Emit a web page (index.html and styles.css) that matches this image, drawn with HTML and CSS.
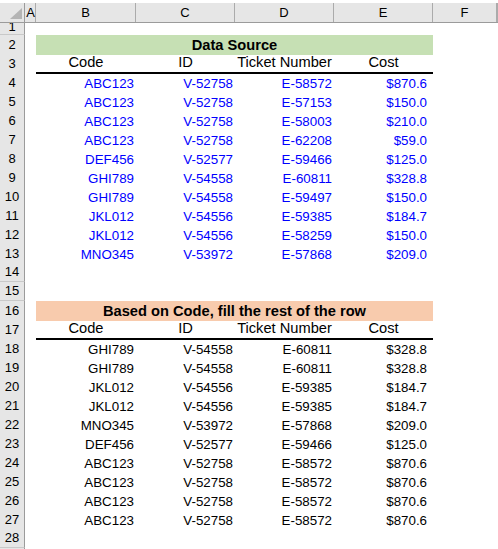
FILE: index.html
```html
<!DOCTYPE html>
<html>
<head>
<meta charset="utf-8">
<link rel="stylesheet" href="styles.css">
</head>
<body>
<div class="sheet">
  <div class="colhead">
    <div class="corner"><span class="tri"></span></div>
    <div class="ch a">A</div>
    <div class="ch">B</div>
    <div class="ch">C</div>
    <div class="ch">D</div>
    <div class="ch">E</div>
    <div class="ch f">F</div>
    <div class="ch g"></div>
  </div>

  <div class="row r1"><div class="rh">1</div></div>
  <div class="row"><div class="rh">2</div><div class="band green">Data Source</div></div>
  <div class="row"><div class="rh">3</div>
    <div class="hdr"><span>Code</span><span>ID</span><span>Ticket Number</span><span>Cost</span></div>
  </div>
  <div class="row blue"><div class="rh">4</div><div class="c b">ABC123</div><div class="c">V-52758</div><div class="c">E-58572</div><div class="c e">$870.6</div></div>
  <div class="row blue"><div class="rh">5</div><div class="c b">ABC123</div><div class="c">V-52758</div><div class="c">E-57153</div><div class="c e">$150.0</div></div>
  <div class="row blue"><div class="rh">6</div><div class="c b">ABC123</div><div class="c">V-52758</div><div class="c">E-58003</div><div class="c e">$210.0</div></div>
  <div class="row blue"><div class="rh">7</div><div class="c b">ABC123</div><div class="c">V-52758</div><div class="c">E-62208</div><div class="c e">$59.0</div></div>
  <div class="row blue"><div class="rh">8</div><div class="c b">DEF456</div><div class="c">V-52577</div><div class="c">E-59466</div><div class="c e">$125.0</div></div>
  <div class="row blue"><div class="rh">9</div><div class="c b">GHI789</div><div class="c">V-54558</div><div class="c">E-60811</div><div class="c e">$328.8</div></div>
  <div class="row blue"><div class="rh">10</div><div class="c b">GHI789</div><div class="c">V-54558</div><div class="c">E-59497</div><div class="c e">$150.0</div></div>
  <div class="row blue"><div class="rh">11</div><div class="c b">JKL012</div><div class="c">V-54556</div><div class="c">E-59385</div><div class="c e">$184.7</div></div>
  <div class="row blue"><div class="rh">12</div><div class="c b">JKL012</div><div class="c">V-54556</div><div class="c">E-58259</div><div class="c e">$150.0</div></div>
  <div class="row blue"><div class="rh">13</div><div class="c b">MNO345</div><div class="c">V-53972</div><div class="c">E-57868</div><div class="c e">$209.0</div></div>
  <div class="row"><div class="rh">14</div></div>
  <div class="row"><div class="rh">15</div></div>
  <div class="row"><div class="rh">16</div><div class="band orange">Based on Code, fill the rest of the row</div></div>
  <div class="row"><div class="rh">17</div>
    <div class="hdr"><span>Code</span><span>ID</span><span>Ticket Number</span><span>Cost</span></div>
  </div>
  <div class="row"><div class="rh">18</div><div class="c b">GHI789</div><div class="c">V-54558</div><div class="c">E-60811</div><div class="c e">$328.8</div></div>
  <div class="row"><div class="rh">19</div><div class="c b">GHI789</div><div class="c">V-54558</div><div class="c">E-60811</div><div class="c e">$328.8</div></div>
  <div class="row"><div class="rh">20</div><div class="c b">JKL012</div><div class="c">V-54556</div><div class="c">E-59385</div><div class="c e">$184.7</div></div>
  <div class="row"><div class="rh">21</div><div class="c b">JKL012</div><div class="c">V-54556</div><div class="c">E-59385</div><div class="c e">$184.7</div></div>
  <div class="row"><div class="rh">22</div><div class="c b">MNO345</div><div class="c">V-53972</div><div class="c">E-57868</div><div class="c e">$209.0</div></div>
  <div class="row"><div class="rh">23</div><div class="c b">DEF456</div><div class="c">V-52577</div><div class="c">E-59466</div><div class="c e">$125.0</div></div>
  <div class="row"><div class="rh">24</div><div class="c b">ABC123</div><div class="c">V-52758</div><div class="c">E-58572</div><div class="c e">$870.6</div></div>
  <div class="row"><div class="rh">25</div><div class="c b">ABC123</div><div class="c">V-52758</div><div class="c">E-58572</div><div class="c e">$870.6</div></div>
  <div class="row"><div class="rh">26</div><div class="c b">ABC123</div><div class="c">V-52758</div><div class="c">E-58572</div><div class="c e">$870.6</div></div>
  <div class="row"><div class="rh">27</div><div class="c b">ABC123</div><div class="c">V-52758</div><div class="c">E-58572</div><div class="c e">$870.6</div></div>
  <div class="row"><div class="rh">28</div></div>
  <div class="row"><div class="rh"></div></div>
</div>
</body>
</html>
```

FILE: styles.css
```css
html, body {
  margin: 0;
  padding: 0;
  background: #ffffff;
}
body {
  font-family: "Liberation Sans", Arial, sans-serif;
  color: #000;
  width: 498px;
  height: 549px;
  overflow: hidden;
}
.sheet {
  padding-top: 3px;
}
.colhead {
  display: grid;
  grid-template-columns: 25px 11px 100px 99px 99px 99px 64px 1fr;
  height: 20px;
  background: #e6e6e6;
  border-bottom: 1px solid #9b9b9b;
  box-sizing: border-box;
}
.corner {
  position: relative;
  border-right: 1px solid #9b9b9b;
}
.tri {
  position: absolute;
  right: 2px;
  bottom: 3px;
  width: 0;
  height: 0;
  border-left: 12px solid transparent;
  border-bottom: 11px solid #b4b4b4;
}
.ch {
  border-right: 1px solid #ababab;
  font-size: 13px;
  line-height: 19px;
  text-align: center;
}
.ch.a {
  padding-left: 1px;
}
.row {
  display: grid;
  grid-template-columns: 25px 11px 100px 99px 99px 99px 64px 1fr;
  height: 19px;
}
.row.r1 {
  height: 12px;
}
.rh {
  grid-column: 1;
  background: #e6e6e6;
  border-right: 1px solid #9b9b9b;
  border-bottom: 1px solid #c9c9c9;
  box-sizing: border-box;
  font-size: 13px;
  line-height: 19px;
  text-align: center;
  overflow: hidden;
  display: flex;
  align-items: flex-end;
  justify-content: center;
}
.r1 .rh {
  line-height: 14px;
}
.band {
  grid-column: 3 / 7;
  font-weight: bold;
  font-size: 14.67px;
  line-height: 19px;
  padding-top: 1px;
  box-sizing: border-box;
  text-align: center;
}
.green {
  background: #c6e0b4;
}
.orange {
  background: #f8cbad;
}
.hdr {
  grid-column: 3 / 7;
  display: grid;
  grid-template-columns: 100px 99px 99px 99px;
  border-bottom: 2px solid #000;
  height: 20px;
  box-sizing: border-box;
  font-size: 14.67px;
  line-height: 17px;
  position: relative;
  z-index: 1;
}
.hdr span {
  text-align: center;
}
.c {
  font-size: 13.33px;
  line-height: 19px;
  padding-top: 1px;
  padding-right: 2px;
  box-sizing: border-box;
  text-align: right;
  white-space: nowrap;
}
.c.b {
  grid-column: 3;
}
.c.e {
  padding-right: 6px;
}
.blue .c {
  color: #0000ff;
}
```
